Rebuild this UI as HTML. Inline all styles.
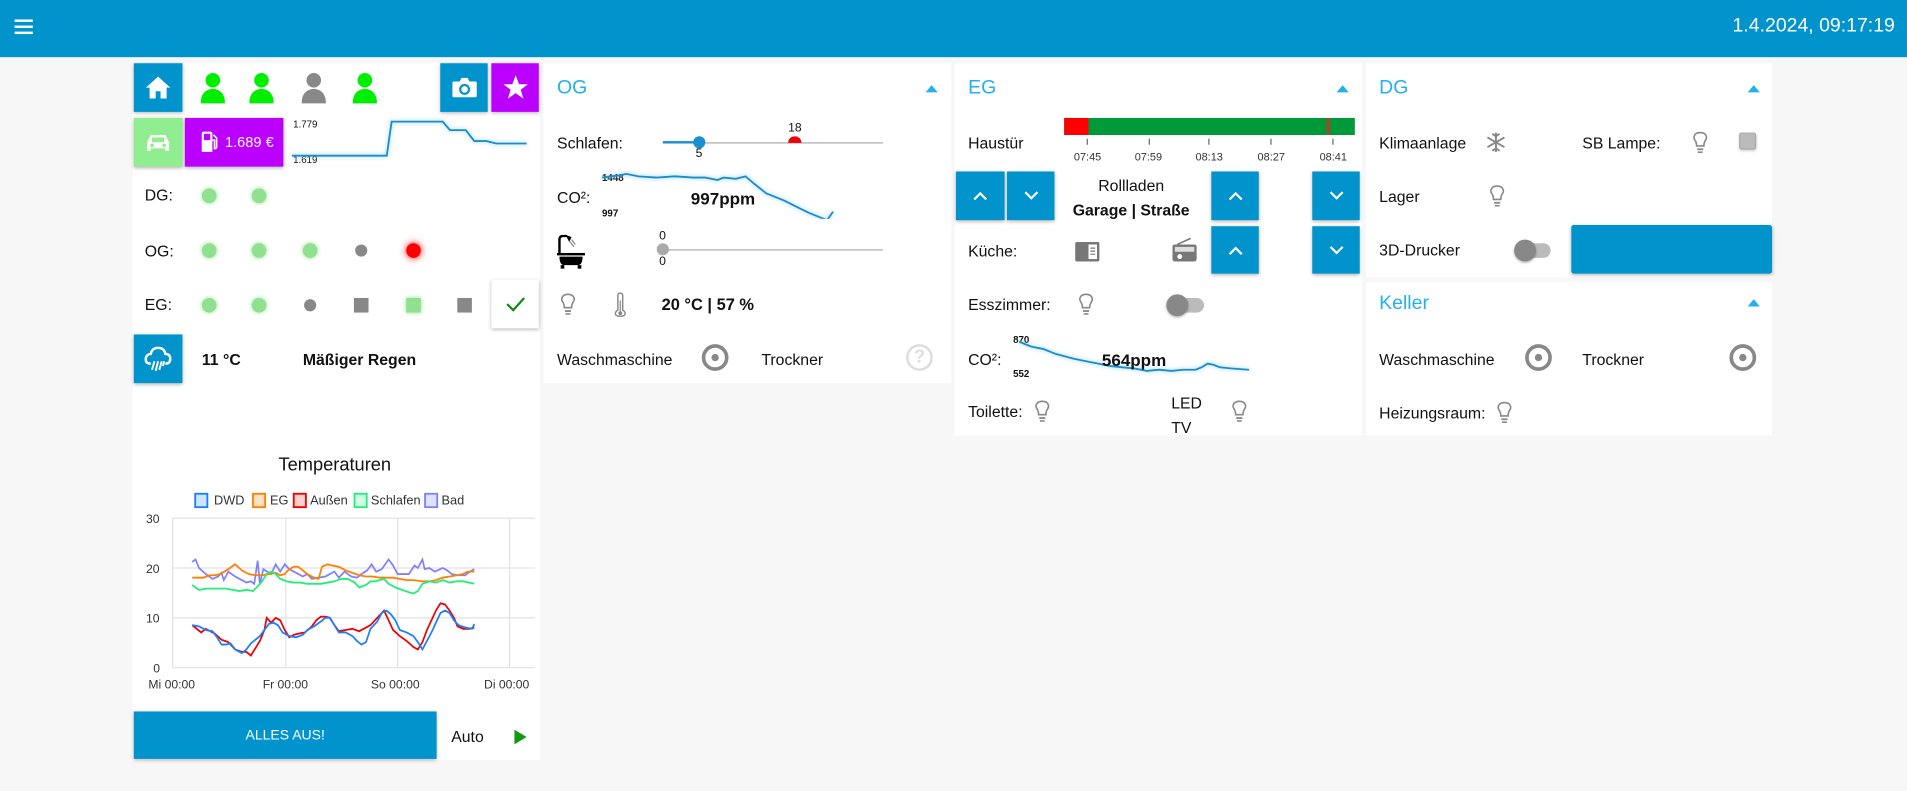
<!DOCTYPE html>
<html><head><meta charset="utf-8"><style>
*{box-sizing:border-box;margin:0;padding:0}
body{width:1907px;height:791px;overflow:hidden;background:#f7f7f7;font-family:"Liberation Sans",sans-serif;color:#111}
#w{position:absolute;left:0;top:0;width:1568px;height:650px;transform:scale(1.2162);transform-origin:0 0}
.a{position:absolute}
.card{position:absolute;background:#fff}
.t{position:absolute;font-size:13px;white-space:nowrap}
.b{font-weight:bold}
.ttl{position:absolute;font-size:16px;color:#22b0f0}
.tri{position:absolute;width:0;height:0;border-left:5px solid transparent;border-right:5px solid transparent;border-bottom:6px solid #22b0f0}
.btn{position:absolute;background:#0093cc;box-shadow:0 1px 3px rgba(0,0,0,.3);display:flex;align-items:center;justify-content:center}
.dot{position:absolute;width:12px;height:12px;border-radius:50%;background:#90e090;box-shadow:0 0 4px #90e090}
.gd{position:absolute;width:10px;height:10px;border-radius:50%;background:#888}
.sq{position:absolute;width:12px;height:12px;background:#888}
</style></head><body><div id="w">
<!-- header -->
<div class="a" style="left:0;top:0;width:1568px;height:47px;background:#0093cc"></div>
<div class="a" style="left:12px;top:16px;width:15px;height:2px;background:#fff;box-shadow:0 5px 0 #fff,0 10px 0 #fff"></div>
<div class="t" style="right:10px;top:13px;color:#fff;font-size:16px">1.4.2024, 09:17:19</div>

<!-- left card -->
<div class="card" style="left:109px;top:52px;width:335px;height:573px"></div>
<div class="btn" style="left:110px;top:52px;width:40px;height:40px"><svg width="22" height="20" viewBox="0 0 22 20"><path d="M11 1 L1 10 H4 V19 H9 V13 H13 V19 H18 V10 H21 Z" fill="#fff"/></svg></div>
<svg class="a" style="left:164px;top:58px" width="150" height="28" viewBox="0 0 150 28">
<g fill="#00ee00"><circle cx="11" cy="8" r="6"/><path d="M1 27 Q1 16 11 15 Q21 16 21 27Z"/></g>
<g fill="#00ee00" transform="translate(40 0)"><circle cx="11" cy="8" r="6"/><path d="M1 27 Q1 16 11 15 Q21 16 21 27Z"/></g>
<g fill="#888" transform="translate(83 0)"><circle cx="11" cy="8" r="6"/><path d="M1 27 Q1 16 11 15 Q21 16 21 27Z"/></g>
<g fill="#00ee00" transform="translate(125 0)"><circle cx="11" cy="8" r="6"/><path d="M1 27 Q1 16 11 15 Q21 16 21 27Z"/></g>
</svg>
<div class="btn" style="left:362px;top:52px;width:39px;height:40px"><svg width="22" height="18" viewBox="0 0 22 18"><path d="M2 4 H7 L8.5 1 H13.5 L15 4 H20 Q21 4 21 5 V16 Q21 17 20 17 H2 Q1 17 1 16 V5 Q1 4 2 4Z" fill="#fff"/><circle cx="11" cy="10.5" r="4.5" fill="#0093cc"/><circle cx="11" cy="10.5" r="2.7" fill="#fff"/></svg></div>
<div class="btn" style="left:404px;top:52px;width:39px;height:40px;background:#bb00ff"><svg width="22" height="22" viewBox="0 0 24 24"><path d="M12 1 L15 9 H23 L16.5 14 L19 22 L12 17 L5 22 L7.5 14 L1 9 H9Z" fill="#fff"/></svg></div>

<div class="btn" style="left:110px;top:97px;width:40px;height:40px;background:#90ee90"><svg width="20" height="16" viewBox="0 0 20 16"><path d="M4 2 H16 L19 8 V15 H16 V13 H4 V15 H1 V8Z" fill="#fff"/><rect x="5" y="4" width="10" height="4" fill="#90ee90"/><circle cx="5" cy="10.5" r="1.5" fill="#90ee90"/><circle cx="15" cy="10.5" r="1.5" fill="#90ee90"/></svg></div>
<div class="btn" style="left:152px;top:97px;width:81px;height:40px;background:#bb00ff;color:#fff;font-size:12px;justify-content:flex-start;padding-left:13px"><svg width="14" height="18" viewBox="0 0 16 20" style="margin-right:6px"><path d="M1 2 Q1 0 3 0 H9 Q11 0 11 2 V19 H1Z" fill="#fff"/><rect x="3" y="2" width="6" height="6" fill="#bb00ff"/><path d="M11 8 H13 V16 Q15 16 15 14 V6 L12 3" stroke="#fff" stroke-width="1.5" fill="none"/></svg>1.689 €</div>
<div class="t" style="left:241px;top:98px;font-size:8px">1.779</div>
<div class="t" style="left:241px;top:127px;font-size:8px">1.619</div>
<svg class="a" style="left:240px;top:95px" width="200" height="40"><polyline points="0,33 78,33 82,5 124,5 130,12 143,12 150,21 160,21 168,23 193,23" fill="none" stroke="#1a8cd0" stroke-width="1.5" style="filter:drop-shadow(0 0 2px #8cd)"/></svg>

<div class="t" style="left:119px;top:153px">DG:</div>
<div class="dot" style="left:166px;top:155px"></div><div class="dot" style="left:207px;top:155px"></div>
<div class="t" style="left:119px;top:199px">OG:</div>
<div class="dot" style="left:166px;top:200px"></div><div class="dot" style="left:207px;top:200px"></div><div class="dot" style="left:249px;top:200px"></div>
<div class="gd" style="left:292px;top:201px"></div>
<div class="dot" style="left:334px;top:200px;background:#f00;box-shadow:0 0 6px #f00"></div>
<div class="t" style="left:119px;top:243px">EG:</div>
<div class="dot" style="left:166px;top:245px"></div><div class="dot" style="left:207px;top:245px"></div>
<div class="gd" style="left:250px;top:246px"></div>
<div class="sq" style="left:291px;top:245px"></div>
<div class="sq" style="left:334px;top:245px;background:#90e090;box-shadow:0 0 4px #90e090"></div>
<div class="sq" style="left:376px;top:245px"></div>
<div class="btn" style="left:404px;top:230px;width:39px;height:40px;background:#fff"><svg width="16" height="14" viewBox="0 0 16 14"><path d="M1 7 L6 12 L15 2" stroke="#118811" stroke-width="1.8" fill="none"/></svg></div>

<div class="btn" style="left:110px;top:275px;width:40px;height:40px"><svg width="24" height="24" viewBox="0 0 24 24"><path d="M6 16 Q1 16 2 11 Q3 8 6 8 Q7 3 12 3 Q17 3 18 8 Q22 8 22 12 Q22 16 18 16" stroke="#fff" stroke-width="2" fill="none"/><path d="M9 14 L7 21 M12 14 L10 22 M15 14 L13 21 M17 14 L16 18" stroke="#fff" stroke-width="1.6"/></svg></div>
<div class="t b" style="left:166px;top:288px">11 °C</div>
<div class="t b" style="left:249px;top:288px">Mäßiger Regen</div>

<div class="t" style="left:229px;top:374px;font-size:15px">Temperaturen</div>
<svg class="a" style="left:120px;top:400px" width="320" height="170" font-family="Liberation Sans" font-size="10" fill="#333">
<g font-size="10.5">
<rect x="40.5" y="6" width="10" height="11" fill="#cce4ff" stroke="#1a7fff" stroke-width="1.5"/><text x="56" y="15">DWD</text>
<rect x="88" y="6" width="10" height="11" fill="#ffe2c4" stroke="#ff8000" stroke-width="1.5"/><text x="102" y="15">EG</text>
<rect x="121.5" y="6" width="10" height="11" fill="#ffd0d0" stroke="#ee0000" stroke-width="1.5"/><text x="135" y="15">Außen</text>
<rect x="171.5" y="6" width="10" height="11" fill="#d0ffe6" stroke="#22ee77" stroke-width="1.5"/><text x="185" y="15">Schlafen</text>
<rect x="229.5" y="6" width="10" height="11" fill="#e0e0ff" stroke="#8080ff" stroke-width="1.5"/><text x="243" y="15">Bad</text>
</g>
<g stroke="#e2e2e2" stroke-width="1"><line x1="22" y1="26" x2="320" y2="26"/><line x1="22" y1="67" x2="320" y2="67"/><line x1="22" y1="108" x2="320" y2="108"/><line x1="22" y1="149" x2="320" y2="149"/>
<line x1="22" y1="26" x2="22" y2="149"/><line x1="115" y1="26" x2="115" y2="149"/><line x1="207" y1="26" x2="207" y2="149"/><line x1="299" y1="26" x2="299" y2="149"/></g>
<text x="0" y="30">30</text><text x="0" y="71">20</text><text x="0" y="112">10</text><text x="6" y="153">0</text>
<text x="2" y="166">Mi 00:00</text><text x="96" y="166">Fr 00:00</text><text x="185" y="166">So 00:00</text><text x="278" y="166">Di 00:00</text>
<g fill="none" stroke-width="1.5" transform="translate(0.9,0) scale(0.928,1)">
<polyline stroke="#8080ff" points="40,62 43,60 46,67 52,72 58,76 63,74 66,71 68,77 72,70 78,74 84,77 88,79 92,78 95,80 98,61 100,80 103,68 110,72 114,64 118,70 122,64 126,68 132,71 138,74 142,72 146,76 152,75 158,74 162,72 166,70 170,75 175,70 181,74 186,75 190,72 195,69 199,64 203,70 208,68 214,60 218,65 222,72 228,72 232,72 237,65 240,67 244,60 246,68 250,67 255,70 262,67 266,69 270,72 275,73 282,73 286,70 290,68"/>
<polyline stroke="#ff8000" points="40,75 50,75 55,73 60,73 65,72 72,68 78,64 84,69 90,72 96,73 102,73 108,72 114,71 118,73 122,72 126,68 130,66 134,66 138,69 142,72 148,75 152,76 155,66 160,64 164,65 170,66 176,69 182,71 188,73 194,74 200,74 206,75 212,75 218,75 224,76 230,77 236,77 244,78 250,78 256,77 262,75 268,74 275,73 280,72 284,70 290,70"/>
<polyline stroke="#22ee77" points="40,81 46,85 52,84 58,84 64,84 70,84 76,85 82,86 88,85 94,86 98,82 102,78 106,72 110,70 114,72 118,76 124,78 130,79 136,79 142,80 148,80 154,80 160,79 166,78 172,76 178,76 184,79 188,83 194,81 198,78 202,78 206,77 210,76 214,80 220,83 226,85 232,87 236,88 240,86 244,80 250,78 256,79 262,77 268,79 274,78 280,78 290,80"/>
<polyline stroke="#ee0000" points="40,114 44,117 48,120 52,117 56,119 60,121 66,126 72,128 78,134 84,136 88,136 92,139 96,133 100,127 104,118 106,108 110,112 114,108 118,110 122,118 126,124 130,122 134,121 140,120 146,115 150,110 154,107 158,107 162,108 166,114 170,119 176,118 182,117 188,119 194,116 198,114 202,110 206,106 210,102 214,110 218,118 224,123 230,127 236,132 240,134 244,128 248,118 252,110 256,102 260,96 264,97 268,102 272,108 275,115 280,117 286,117 290,116"/>
<polyline stroke="#1a7fff" points="40,114 46,115 52,118 58,119 62,124 66,130 70,130 74,129 78,134 84,137 88,134 92,129 96,126 100,123 104,118 108,113 112,112 116,114 120,120 126,123 132,124 138,122 142,118 148,115 154,111 158,108 162,108 166,114 170,120 176,120 182,123 186,127 190,130 194,128 198,117 204,111 208,104 212,102 216,105 220,110 224,118 230,120 236,123 240,128 244,134 248,127 252,120 256,112 260,104 264,102 268,104 272,110 276,114 282,116 288,117 290,113"/>
</g></svg>
<div class="btn" style="left:110px;top:585px;width:249px;height:39px;color:#fff;font-size:11.5px">ALLES AUS!</div>
<div class="t" style="left:371px;top:598px;font-size:13px">Auto</div>
<div class="a" style="left:423px;top:600px;width:0;height:0;border-top:6px solid transparent;border-bottom:6px solid transparent;border-left:10px solid #119911"></div>

<!-- OG card -->
<div class="card" style="left:447px;top:52px;width:335px;height:263px"></div>
<div class="ttl" style="left:458px;top:64px">OG</div><div class="tri" style="left:761px;top:70px"></div>
<div class="t" style="left:458px;top:110px">Schlafen:</div>
<div class="a" style="left:545px;top:117px;width:181px;height:1px;background:#aaa"></div>
<div class="a" style="left:545px;top:116px;width:30px;height:2px;background:#1a90d0"></div>
<div class="a" style="left:570px;top:112px;width:10px;height:10px;border-radius:50%;background:#1a90d0"></div>
<div class="t" style="left:572px;top:121px;font-size:10px">5</div>
<div class="a" style="left:648px;top:112px;width:11px;height:11px;border-radius:50%;background:#e00;clip-path:inset(0 0 50% 0)"></div>
<div class="t" style="left:648px;top:100px;font-size:10px">18</div>
<div class="t" style="left:458px;top:155px">CO²:</div>
<div class="t" style="left:495px;top:142px;font-size:8px;font-weight:bold">1448</div>
<div class="t" style="left:495px;top:171px;font-size:8px;font-weight:bold">997</div>
<svg class="a" style="left:495px;top:140px" width="200" height="40"><polyline points="0,7 15,5 20,4 30,6 45,7 60,6 75,7 85,7 95,9 100,7 110,8 118,6 125,12 135,20 150,26 160,31 170,36 180,40 185,42 190,35" fill="none" stroke="#1a8cd0" stroke-width="1.5" style="filter:drop-shadow(0 0 2px #8cd)" transform="translate(0,-1)"/></svg>
<div class="t b" style="left:568px;top:155px;font-size:14px">997ppm</div>
<svg class="a" style="left:458px;top:193px" width="24" height="28" viewBox="0 0 24 28"><path d="M2 15 V4 Q2 1 5 1 H8" stroke="#000" stroke-width="2" fill="none"/><path d="M7 0 L12 2 L10 6 Z" fill="#000"/><path d="M10 5 L14 10 M12 4 L15 8" stroke="#888"/><rect x="0" y="15" width="23" height="2" fill="#000"/><path d="M2 18 H21 Q21 25 17 25 H6 Q2 25 2 18Z" fill="#000"/><rect x="3" y="25" width="3" height="3" fill="#000"/><rect x="17" y="25" width="3" height="3" fill="#000"/></svg>
<div class="a" style="left:545px;top:205px;width:181px;height:1px;background:#aaa"></div>
<div class="a" style="left:540px;top:200px;width:10px;height:10px;border-radius:50%;background:#aaa"></div>
<div class="t" style="left:542px;top:189px;font-size:10px">0</div>
<div class="t" style="left:542px;top:210px;font-size:10px">0</div>
<svg class="a" style="left:461px;top:241px" width="12" height="18" viewBox="0 0 12 18"><path d="M3 12 Q3 9 1.5 7 Q0.5 5.5 1 4 Q2 1 6 1 Q10 1 11 4 Q11.5 5.5 10.5 7 Q9 9 9 12Z" stroke="#888" stroke-width="1.3" fill="none"/><rect x="3.5" y="14" width="5" height="1.5" fill="#888"/><rect x="4" y="16.5" width="4" height="1.3" fill="#888"/></svg>
<svg class="a" style="left:505px;top:240px" width="10" height="21" viewBox="0 0 10 21"><path d="M3 15 V3 Q3 1 5 1 Q7 1 7 3 V15 Q9 16 9 18 Q9 20 5 20 Q1 20 1 18 Q1 16 3 15Z" stroke="#888" stroke-width="1.2" fill="none"/><circle cx="5" cy="17.5" r="1.6" fill="#888"/><line x1="5" y1="7" x2="5" y2="16" stroke="#888"/></svg>
<div class="t b" style="left:544px;top:243px;font-size:13.5px">20 °C | 57 %</div>
<div class="t" style="left:458px;top:288px">Waschmaschine</div>
<div class="a" style="left:577px;top:283px;width:22px;height:22px;border-radius:50%;border:3px solid #888"></div>
<div class="a" style="left:585px;top:291px;width:6px;height:6px;border-radius:50%;background:#888"></div>
<div class="t" style="left:626px;top:288px">Trockner</div>
<div class="a" style="left:745px;top:283px;width:22px;height:22px;border-radius:50%;border:2px solid #ddd;color:#ddd;font-size:15px;font-weight:bold;text-align:center;line-height:18px">?</div>

<!-- EG card -->
<div class="card" style="left:785px;top:52px;width:335px;height:306px"></div>
<div class="ttl" style="left:796px;top:64px">EG</div><div class="tri" style="left:1099px;top:70px"></div>
<div class="t" style="left:796px;top:110px">Haustür</div>
<div class="a" style="left:875px;top:97px;width:239px;height:14px;background:#00993a"></div>
<div class="a" style="left:875px;top:97px;width:20px;height:14px;background:#f00"></div>
<div class="a" style="left:1091px;top:97px;width:2px;height:14px;background:#e22"></div>
<svg class="a" style="left:880px;top:114px" width="240" height="24" font-family="Liberation Sans" font-size="9" fill="#333"><g stroke="#666"><line x1="14" y1="0" x2="14" y2="5"/><line x1="65" y1="0" x2="65" y2="5"/><line x1="114" y1="0" x2="114" y2="5"/><line x1="165" y1="0" x2="165" y2="5"/><line x1="216" y1="0" x2="216" y2="5"/></g><text x="3" y="18">07:45</text><text x="53" y="18">07:59</text><text x="103" y="18">08:13</text><text x="154" y="18">08:27</text><text x="205" y="18">08:41</text></svg>
<div class="btn" style="left:786px;top:141px;width:40px;height:40px"><svg width="12" height="8"><path d="M1 7 L6 2 L11 7" stroke="#fff" stroke-width="1.8" fill="none"/></svg></div>
<div class="btn" style="left:828px;top:141px;width:39px;height:40px"><svg width="12" height="8"><path d="M1 1 L6 6 L11 1" stroke="#fff" stroke-width="1.8" fill="none"/></svg></div>
<div class="t" style="left:903px;top:145px">Rollladen</div>
<div class="t b" style="left:882px;top:165px">Garage | Straße</div>
<div class="btn" style="left:996px;top:141px;width:39px;height:40px"><svg width="12" height="8"><path d="M1 7 L6 2 L11 7" stroke="#fff" stroke-width="1.8" fill="none"/></svg></div>
<div class="btn" style="left:1079px;top:141px;width:39px;height:40px"><svg width="12" height="8"><path d="M1 1 L6 6 L11 1" stroke="#fff" stroke-width="1.8" fill="none"/></svg></div>
<div class="btn" style="left:996px;top:186px;width:39px;height:39px"><svg width="12" height="8"><path d="M1 7 L6 2 L11 7" stroke="#fff" stroke-width="1.8" fill="none"/></svg></div>
<div class="btn" style="left:1079px;top:186px;width:39px;height:39px"><svg width="12" height="8"><path d="M1 1 L6 6 L11 1" stroke="#fff" stroke-width="1.8" fill="none"/></svg></div>
<div class="t" style="left:796px;top:199px">Küche:</div>
<svg class="a" style="left:884px;top:199px" width="20" height="16" viewBox="0 0 20 16"><rect x="0" y="0" width="20" height="16" rx="1.5" fill="#777"/><rect x="11" y="2" width="7" height="12" fill="#fff"/><path d="M12.5 5 H16.5 M12.5 7.5 H16.5 M12.5 10 H16.5" stroke="#777"/></svg>
<svg class="a" style="left:964px;top:195px" width="20" height="20" viewBox="0 0 20 20"><path d="M4 6 L15 1" stroke="#777" stroke-width="1.3"/><rect x="0" y="6" width="20" height="14" rx="2" fill="#777"/><rect x="2" y="8" width="16" height="4" fill="#ddd"/><circle cx="6" cy="16" r="2" fill="#fff"/></svg>
<div class="t" style="left:796px;top:243px">Esszimmer:</div>
<svg class="a" style="left:887px;top:241px" width="12" height="18" viewBox="0 0 12 18"><path d="M3 12 Q3 9 1.5 7 Q0.5 5.5 1 4 Q2 1 6 1 Q10 1 11 4 Q11.5 5.5 10.5 7 Q9 9 9 12Z" stroke="#888" stroke-width="1.3" fill="none"/><rect x="3.5" y="14" width="5" height="1.5" fill="#888"/><rect x="4" y="16.5" width="4" height="1.3" fill="#888"/></svg>
<div class="a" style="left:963px;top:245px;width:27px;height:12px;border-radius:6px;background:#bbb"></div>
<div class="a" style="left:959px;top:242px;width:18px;height:18px;border-radius:50%;background:#888;box-shadow:0 1px 2px rgba(0,0,0,.3)"></div>
<div class="t" style="left:796px;top:288px">CO²:</div>
<div class="t" style="left:833px;top:275px;font-size:8px;font-weight:bold">870</div>
<div class="t" style="left:833px;top:303px;font-size:8px;font-weight:bold">552</div>
<svg class="a" style="left:833px;top:275px" width="200" height="40"><polyline points="5,6 15,10 25,12 35,16 50,20 60,22 70,24 80,26 90,27 100,28 110,30 120,29 130,30 140,29 150,29 155,27 160,24 165,25 170,27 180,28 194,29" fill="none" stroke="#1a8cd0" stroke-width="1.5" style="filter:drop-shadow(0 0 2px #8cd)"/></svg>
<div class="t b" style="left:906px;top:288px;font-size:14px">564ppm</div>
<div class="t" style="left:796px;top:331px">Toilette:</div>
<svg class="a" style="left:851px;top:329px" width="12" height="18" viewBox="0 0 12 18"><path d="M3 12 Q3 9 1.5 7 Q0.5 5.5 1 4 Q2 1 6 1 Q10 1 11 4 Q11.5 5.5 10.5 7 Q9 9 9 12Z" stroke="#888" stroke-width="1.3" fill="none"/><rect x="3.5" y="14" width="5" height="1.5" fill="#888"/><rect x="4" y="16.5" width="4" height="1.3" fill="#888"/></svg>
<div class="t" style="left:963px;top:322px;line-height:20px">LED<br>TV</div>
<svg class="a" style="left:1013px;top:329px" width="12" height="18" viewBox="0 0 12 18"><path d="M3 12 Q3 9 1.5 7 Q0.5 5.5 1 4 Q2 1 6 1 Q10 1 11 4 Q11.5 5.5 10.5 7 Q9 9 9 12Z" stroke="#888" stroke-width="1.3" fill="none"/><rect x="3.5" y="14" width="5" height="1.5" fill="#888"/><rect x="4" y="16.5" width="4" height="1.3" fill="#888"/></svg>

<!-- DG card -->
<div class="card" style="left:1123px;top:52px;width:334px;height:176px"></div>
<div class="ttl" style="left:1134px;top:64px">DG</div><div class="tri" style="left:1437px;top:70px"></div>
<div class="t" style="left:1134px;top:110px">Klimaanlage</div>
<svg class="a" style="left:1221px;top:108px" width="18" height="18" viewBox="0 0 18 18"><g stroke="#888" stroke-width="1.6"><line x1="9" y1="1" x2="9" y2="17"/><line x1="2" y1="5" x2="16" y2="13"/><line x1="2" y1="13" x2="16" y2="5"/><path d="M6 2 L9 4 L12 2 M6 16 L9 14 L12 16" fill="none"/></g></svg>
<div class="t" style="left:1301px;top:110px">SB Lampe:</div>
<svg class="a" style="left:1392px;top:108px" width="12" height="18" viewBox="0 0 12 18"><path d="M3 12 Q3 9 1.5 7 Q0.5 5.5 1 4 Q2 1 6 1 Q10 1 11 4 Q11.5 5.5 10.5 7 Q9 9 9 12Z" stroke="#888" stroke-width="1.3" fill="none"/><rect x="3.5" y="14" width="5" height="1.5" fill="#888"/><rect x="4" y="16.5" width="4" height="1.3" fill="#888"/></svg>
<div class="a" style="left:1430px;top:109px;width:14px;height:14px;border-radius:2px;background:#bbb;border:1px solid #aaa;box-shadow:0 1px 2px rgba(0,0,0,.2)"></div>
<div class="t" style="left:1134px;top:154px">Lager</div>
<svg class="a" style="left:1225px;top:152px" width="12" height="18" viewBox="0 0 12 18"><path d="M3 12 Q3 9 1.5 7 Q0.5 5.5 1 4 Q2 1 6 1 Q10 1 11 4 Q11.5 5.5 10.5 7 Q9 9 9 12Z" stroke="#888" stroke-width="1.3" fill="none"/><rect x="3.5" y="14" width="5" height="1.5" fill="#888"/><rect x="4" y="16.5" width="4" height="1.3" fill="#888"/></svg>
<div class="t" style="left:1134px;top:198px">3D-Drucker</div>
<div class="a" style="left:1248px;top:200px;width:27px;height:12px;border-radius:6px;background:#bbb"></div>
<div class="a" style="left:1245px;top:197px;width:18px;height:18px;border-radius:50%;background:#888;box-shadow:0 1px 2px rgba(0,0,0,.3)"></div>
<div class="btn" style="left:1292px;top:185px;width:165px;height:40px;border-radius:2px"></div>

<!-- Keller -->
<div class="card" style="left:1123px;top:232px;width:334px;height:126px"></div>
<div class="ttl" style="left:1134px;top:241px">Keller</div><div class="tri" style="left:1437px;top:246px"></div>
<div class="t" style="left:1134px;top:288px">Waschmaschine</div>
<div class="a" style="left:1254px;top:283px;width:22px;height:22px;border-radius:50%;border:3px solid #888"></div>
<div class="a" style="left:1262px;top:291px;width:6px;height:6px;border-radius:50%;background:#888"></div>
<div class="t" style="left:1301px;top:288px">Trockner</div>
<div class="a" style="left:1422px;top:283px;width:22px;height:22px;border-radius:50%;border:3px solid #888"></div>
<div class="a" style="left:1430px;top:291px;width:6px;height:6px;border-radius:50%;background:#888"></div>
<div class="t" style="left:1134px;top:332px">Heizungsraum:</div>
<svg class="a" style="left:1231px;top:330px" width="12" height="18" viewBox="0 0 12 18"><path d="M3 12 Q3 9 1.5 7 Q0.5 5.5 1 4 Q2 1 6 1 Q10 1 11 4 Q11.5 5.5 10.5 7 Q9 9 9 12Z" stroke="#888" stroke-width="1.3" fill="none"/><rect x="3.5" y="14" width="5" height="1.5" fill="#888"/><rect x="4" y="16.5" width="4" height="1.3" fill="#888"/></svg>
</div></body></html>
